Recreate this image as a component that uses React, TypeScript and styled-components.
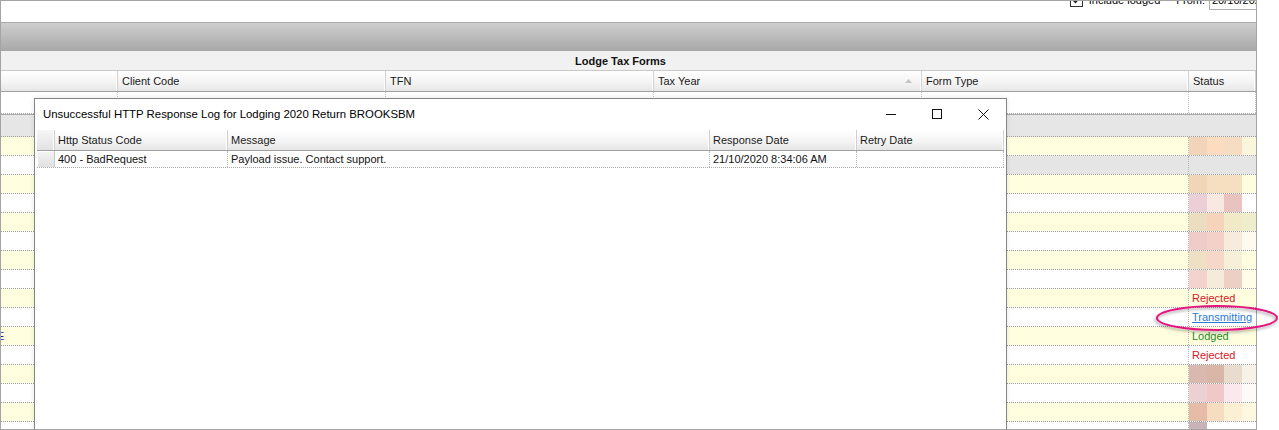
import React from 'react';
import styled, { createGlobalStyle } from 'styled-components';

const GlobalStyle = createGlobalStyle`
  html, body { margin: 0; padding: 0; background: #ffffff; }
  body { font-family: "Liberation Sans", Arial, sans-serif; font-size: 11px; color: #000; }
  * { box-sizing: border-box; }
`;

const Screen = styled.div`
  position: relative;
  width: 1279px;
  height: 430px;
  overflow: hidden;
  background: #fff;
`;

const Frame = styled.div`
  position: relative;
  width: 1257px;
  height: 430px;
  border: 1px solid #a4a4a4;
  overflow: hidden;
  display: flex;
  flex-direction: column;
  background: #fff;
`;

const Toolbar = styled.div`
  height: 22px;
  flex: none;
  border-bottom: 1px solid #a8a8a8;
  display: flex;
  justify-content: flex-end;
  align-items: flex-start;
  overflow: hidden;
`;

const Controls = styled.div`
  margin-top: -12px;
  margin-right: -10px;
  height: 22px;
  display: flex;
  align-items: center;
  gap: 6px;
`;

const CheckBox = styled.span`
  width: 13px;
  height: 13px;
  border: 1px solid #333;
  background: #fff;
  display: inline-flex;
  align-items: center;
  justify-content: center;
`;

const Label = styled.span<{ $gapAfter?: number }>`
  white-space: nowrap;
  margin-right: ${p => p.$gapAfter ?? 0}px;
`;

const DateBox = styled.span`
  width: 57px;
  height: 20px;
  border: 1px solid #abadb3;
  padding: 0 2px;
  display: inline-flex;
  align-items: center;
  margin-left: -2px;
`;

const GrayBand = styled.div`
  height: 28px;
  flex: none;
  background: linear-gradient(#cecece, #a8a8a8);
`;

const TitleBand = styled.div`
  height: 20px;
  flex: none;
  background: #f1f1f1;
  border-bottom: 1px solid #c8c8c8;
  display: flex;
  align-items: center;
  justify-content: center;
  padding-right: 16px;
  font-weight: bold;
  color: #111;
`;

const COLS = '117px 268px 268px 268px 267px 1fr';

const HeaderRow = styled.div`
  height: 21px;
  flex: none;
  display: grid;
  grid-template-columns: ${COLS};
  border-bottom: 1px solid #a0a0a0;
  background: linear-gradient(#ffffff, #f3f3f3 60%, #e6e6e6);
`;

const HeaderCell = styled.div`
  position: relative;
  border-right: 1px solid #d2d2d2;
  box-shadow: inset -1px 0 0 #fff;
  padding-left: 4px;
  display: flex;
  align-items: center;
  color: #1a1a1a;
  white-space: nowrap;
`;

const SortArrow = styled.svg`
  position: absolute;
  right: 9px;
  top: 8px;
`;

const FilterRow = styled.div`
  height: 22px;
  flex: none;
  display: grid;
  grid-template-columns: ${COLS};
  border-bottom: 1px dotted #a8a8a8;
`;

const FilterCell = styled.div`
  border-right: 1px dotted #c0c0c0;
`;

const GroupRow = styled.div`
  height: 23px;
  flex: none;
  border-top: 1px solid #a8a8a8;
  border-bottom: 1px dotted #a0a0a0;
  background: #e6e6e6;
`;

type Tone = 'yellow' | 'white' | 'focus';

const DataRow = styled.div`
  height: 19px;
  flex: none;
  display: grid;
  grid-template-columns: ${COLS};
  border-bottom: 1px dotted #9a9a9a;
`;

const bgFor = (t: Tone, first: boolean) =>
  t === 'yellow' ? '#ffffe0' : t === 'focus' && !first ? '#e5e5e5' : '#ffffff';

const DataCell = styled.div<{ $tone: Tone; $first?: boolean }>`
  background: ${p => bgFor(p.$tone, !!p.$first)};
  border-right: 1px dotted #b4b4b4;
  overflow: hidden;
  white-space: nowrap;
  display: flex;
  align-items: center;
`;

const StatusCell = styled.div<{ $tone: Tone }>`
  background: ${p => bgFor(p.$tone, false)};
  overflow: hidden;
  white-space: nowrap;
  display: flex;
  align-items: center;
  padding-left: 3px;
`;

const Mosaic = styled.div`
  display: flex;
  height: 100%;
  margin-left: -3px;
`;

const Tile = styled.span<{ $c: string; $w: number }>`
  width: ${p => p.$w}px;
  height: 100%;
  background: ${p => p.$c};
  flex: none;
`;

const StatusText = styled.span<{ $kind: 'rejected' | 'transmitting' | 'lodged' }>`
  color: ${p => (p.$kind === 'rejected' ? '#d9161f' : p.$kind === 'lodged' ? '#218a1c' : '#2d7ad6')};
  text-decoration: ${p => (p.$kind === 'transmitting' ? 'underline' : 'none')};
`;

const Fragment = styled.span`
  color: #1d1d9c;
  margin-left: -4px;
  font-size: 11px;
`;

/* Dialog */
const Dialog = styled.div`
  position: absolute;
  left: 33px;
  top: 97px;
  width: 973px;
  height: 360px;
  border: 1px solid #858585;
  background: #fff;
  box-shadow: 0 0 5px rgba(0, 0, 0, 0.1);
  display: flex;
  flex-direction: column;
`;

const TitleBar = styled.div`
  height: 30px;
  flex: none;
  display: flex;
  align-items: center;
`;

const DialogTitle = styled.div`
  flex: 1;
  padding-left: 8px;
  font-size: 11.4px;
  color: #000;
  white-space: nowrap;
`;

const CaptionButton = styled.div`
  width: 46px;
  height: 30px;
  display: flex;
  align-items: center;
  justify-content: center;
`;

const DialogBody = styled.div`
  padding: 1px 2px 0 2px;
  flex: 1;
`;

const DCOLS = '18px 173px 482px 147px 147px';

const DHeader = styled.div`
  height: 21px;
  display: grid;
  grid-template-columns: ${DCOLS};
  border-bottom: 1px solid #a0a0a0;
  background: linear-gradient(#ffffff, #f3f3f3 60%, #e5e5e5);
`;

const DHeadCell = styled.div<{ $rowHead?: boolean }>`
  border-right: 1px solid #d0d0d0;
  box-shadow: inset -1px 0 0 #fff;
  padding-left: 3px;
  display: flex;
  align-items: center;
  color: #1a1a1a;
  white-space: nowrap;
  ${p => (p.$rowHead ? 'background: linear-gradient(#f6f6f6, #e2e2e2);' : '')}
`;

const DRow = styled.div`
  height: 17px;
  display: grid;
  grid-template-columns: ${DCOLS};
  border-bottom: 1px dotted #a8a8a8;
`;

const DCell = styled.div<{ $rowHead?: boolean }>`
  border-right: 1px dotted #b8b8b8;
  padding-left: 3px;
  display: flex;
  align-items: center;
  white-space: nowrap;
  color: #111;
  ${p =>
    p.$rowHead
      ? 'background: linear-gradient(#f4f4f4, #e0e0e0); border-right: 1px solid #c8c8c8; box-shadow: inset 1px 1px 0 #fff;'
      : ''}
`;

const Ellipse = styled.svg`
  position: absolute;
  left: 1148px;
  top: 300px;
  overflow: visible;
`;

type Row = { tone: Tone; mosaic?: string[]; status?: 'rejected' | 'transmitting' | 'lodged'; frag?: boolean };

const TILE_W = [18, 17, 18, 18];

const rows: Row[] = [
  { tone: 'yellow', mosaic: ['#f2d4bb', '#fbdcc0', '#f6dcc3', '#fbf5dc'] },
  { tone: 'focus' },
  { tone: 'yellow', mosaic: ['#f0d6b6', '#f6dfc0', '#f6dfc0', '#fffde0'] },
  { tone: 'white', mosaic: ['#ecced6', '#f9e8e2', '#e8c3c0', '#ffffff'] },
  { tone: 'yellow', mosaic: ['#ecdcc0', '#f6d4bc', '#f2e9c8', '#eeeecc'] },
  { tone: 'white', mosaic: ['#f0ccc8', '#f3d0c8', '#f7ebdc', '#fffaf0'] },
  { tone: 'yellow', mosaic: ['#efdfc4', '#f6d7c8', '#f7f0d8', '#fffde0'] },
  { tone: 'white', mosaic: ['#f3d3cc', '#f6ebda', '#ecd0c4', '#fffde8'] },
  { tone: 'yellow', status: 'rejected' },
  { tone: 'white', status: 'transmitting' },
  { tone: 'yellow', status: 'lodged', frag: true },
  { tone: 'white', status: 'rejected' },
  { tone: 'yellow', mosaic: ['#d9b8b0', '#d8b6a8', '#eadccc', '#f6f2e8'] },
  { tone: 'white', mosaic: ['#ecd0d4', '#f0c8c8', '#fbe8ec', '#fdfafa'] },
  { tone: 'yellow', mosaic: ['#e6bca8', '#f6dcc0', '#fbefd4', '#fff8e0'] },
  { tone: 'white', mosaic: ['#c8b4b8', '#ffffff', '#ffffff', '#ffffff'] },
];

const statusLabel = { rejected: 'Rejected', transmitting: 'Transmitting', lodged: 'Lodged' };

const headers = ['', 'Client Code', 'TFN', 'Tax Year', 'Form Type', 'Status'];

export default function App() {
  return (
    <Screen>
      <GlobalStyle />
      <Frame>
        <Toolbar>
          <Controls>
            <CheckBox>
              <svg width="9" height="8" viewBox="0 0 9 8">
                <path d="M1 4 L3.5 6.5 L8 1" fill="none" stroke="#222" strokeWidth="1.4" />
              </svg>
            </CheckBox>
            <Label $gapAfter={10}>Include lodged</Label>
            <Label>From:</Label>
            <DateBox>20/10/2020</DateBox>
          </Controls>
        </Toolbar>
        <GrayBand />
        <TitleBand>Lodge Tax Forms</TitleBand>
        <HeaderRow>
          {headers.map((h, i) => (
            <HeaderCell key={i}>
              {h}
              {h === 'Tax Year' && (
                <SortArrow width="7" height="4" viewBox="0 0 7 4">
                  <path d="M0 4 L3.5 0 L7 4 Z" fill="#c4c4c4" />
                </SortArrow>
              )}
            </HeaderCell>
          ))}
        </HeaderRow>
        <FilterRow>
          {headers.map((_, i) => (
            <FilterCell key={i} />
          ))}
        </FilterRow>
        <GroupRow />
        {rows.map((r, i) => (
          <DataRow key={i}>
            <DataCell $tone={r.tone} $first>
              {r.frag && <Fragment>E</Fragment>}
            </DataCell>
            <DataCell $tone={r.tone} />
            <DataCell $tone={r.tone} />
            <DataCell $tone={r.tone} />
            <DataCell $tone={r.tone} />
            <StatusCell $tone={r.tone}>
              {r.mosaic && (
                <Mosaic>
                  {r.mosaic.map((c, j) => (
                    <Tile key={j} $c={c} $w={TILE_W[j]} />
                  ))}
                </Mosaic>
              )}
              {r.status && <StatusText $kind={r.status}>{statusLabel[r.status]}</StatusText>}
            </StatusCell>
          </DataRow>
        ))}

        <Dialog>
          <TitleBar>
            <DialogTitle>Unsuccessful HTTP Response Log for Lodging 2020 Return BROOKSBM</DialogTitle>
            <CaptionButton>
              <svg width="10" height="10" viewBox="0 0 10 10">
                <path d="M0 5.5 H10" stroke="#111" strokeWidth="1" />
              </svg>
            </CaptionButton>
            <CaptionButton>
              <svg width="10" height="10" viewBox="0 0 10 10">
                <rect x="0.5" y="0.5" width="9" height="9" fill="none" stroke="#111" strokeWidth="1" />
              </svg>
            </CaptionButton>
            <CaptionButton>
              <svg width="11" height="11" viewBox="0 0 11 11">
                <path d="M0.5 0.5 L10.5 10.5 M10.5 0.5 L0.5 10.5" stroke="#111" strokeWidth="1" />
              </svg>
            </CaptionButton>
          </TitleBar>
          <DialogBody>
            <DHeader>
              <DHeadCell $rowHead />
              <DHeadCell>Http Status Code</DHeadCell>
              <DHeadCell>Message</DHeadCell>
              <DHeadCell>Response Date</DHeadCell>
              <DHeadCell>Retry Date</DHeadCell>
            </DHeader>
            <DRow>
              <DCell $rowHead />
              <DCell>400 - BadRequest</DCell>
              <DCell>Payload issue. Contact support.</DCell>
              <DCell>21/10/2020 8:34:06 AM</DCell>
              <DCell />
            </DRow>
          </DialogBody>
        </Dialog>
      </Frame>
      <Ellipse width="131" height="36" viewBox="0 0 131 36">
        <defs>
          <filter id="sh" x="-10%" y="-40%" width="120%" height="180%">
            <feDropShadow dx="-1" dy="2" stdDeviation="1.5" floodColor="#000" floodOpacity="0.35" />
          </filter>
        </defs>
        <ellipse cx="69" cy="18" rx="60" ry="12" fill="none" stroke="#e3197f" strokeWidth="2" filter="url(#sh)" />
      </Ellipse>
    </Screen>
  );
}
